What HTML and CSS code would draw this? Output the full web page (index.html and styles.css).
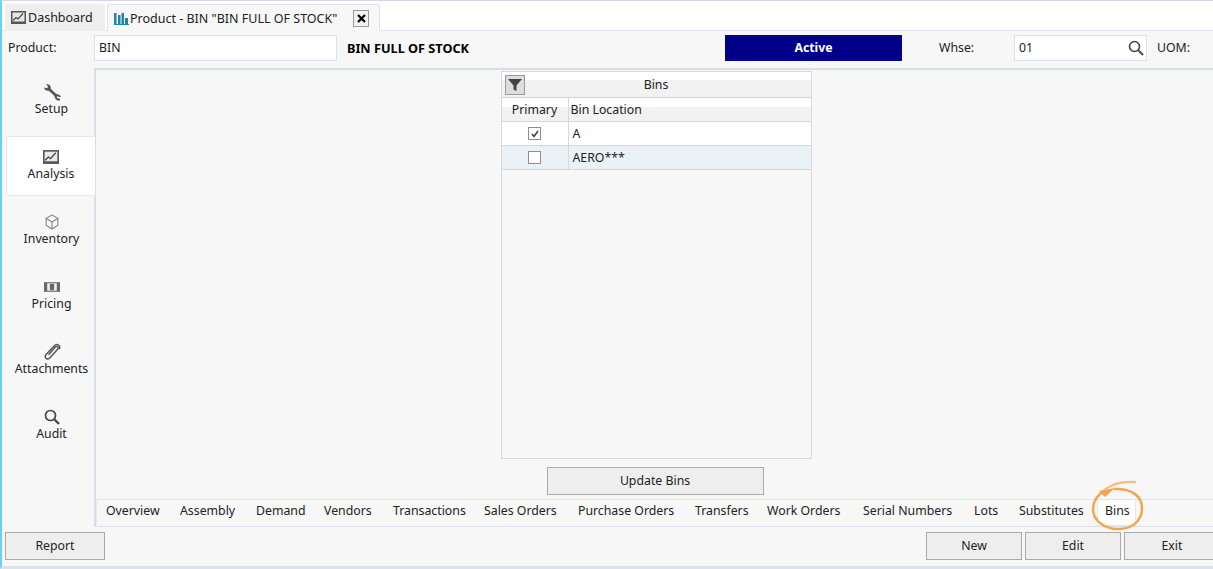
FILE: index.html
```html
<!DOCTYPE html>
<html lang="en">
<head>
<meta charset="utf-8">
<title>Product - BIN</title>
<link rel="stylesheet" href="styles.css">
</head>
<body>
<div class="app">
  <div class="tabs">
    <div class="tab">
      <svg class="ico-tab" viewBox="0 0 15 13"><rect width="15" height="13" fill="#555"/><rect x="1.5" y="1.5" width="12" height="9" fill="#e8e8e8"/><path d="M2 9.500l3-3 2 1.500 5-5.500" fill="none" stroke="#444" stroke-width="1.2"/></svg>
      <span>Dashboard</span>
    </div>
    <div class="tab active">
      <svg class="ico-tab" viewBox="0 0 15 13"><path d="M0 1h2.500v11H0zM4 3h2.500v9H4zM7.500 1H10v11H7.500zM11 6h3v6h-3zM0 12h15v1H0z" fill="#1f86a8"/></svg>
      <span>Product - BIN "BIN FULL OF STOCK"</span>
      <span class="close"><svg viewBox="0 0 9 9"><path d="M1 1l7 7M8 1L1 8" stroke="#000" stroke-width="2.200"/></svg></span>
    </div>
  </div>
  <div class="header">
    <span class="lbl lbl-product">Product:</span>
    <div class="field field-product">BIN</div>
    <strong class="desc">BIN FULL OF STOCK</strong>
    <div class="status">Active</div>
    <span class="lbl lbl-whse">Whse:</span>
    <div class="field field-whse">
      <span>01</span>
      <svg class="ico-search" viewBox="0 0 16 16"><circle cx="6.500" cy="6.500" r="5" fill="none" stroke="#444" stroke-width="1.600"/><path d="M10.500 10.500l4.500 4.500" stroke="#555" stroke-width="2.400"/></svg>
    </div>
    <span class="lbl lbl-uom">UOM:</span>
  </div>
  <div class="body">
    <nav class="side">
      <div class="side-item">
        <svg class="side-ico ico-wrench" viewBox="0 0 18 18"><path d="M6 6l8 7.500" stroke="#555" stroke-width="2.600" fill="none"/><path d="M1 4.500C1.500 7 4 8.500 6.500 7.500 8 6.500 8.300 4 7 2.500 6 1.500 4.500 1 3 1.500l2.200 2-1.200 1.700z" fill="#555"/><path d="M12.500 13c0 2.500 2 4 4.500 3.500" stroke="#555" stroke-width="2" fill="none"/><path d="M13 12.500c1.500-.8 3.500 0 4 1.500" stroke="#555" stroke-width="2" fill="none"/></svg>
        <span>Setup</span>
      </div>
      <div class="side-item selected">
        <svg class="side-ico" viewBox="0 0 15 13"><rect width="15" height="13" fill="#555"/><rect x="1.500" y="1.500" width="12" height="9" fill="#e8e8e8"/><path d="M2 9.500l3-3 2 1.500 5-5.500" fill="none" stroke="#444" stroke-width="1.200"/></svg>
        <span>Analysis</span>
      </div>
      <div class="side-item">
        <svg class="side-ico" viewBox="0 0 14 15"><path d="M7 1l5.500 3v6.500L7 14 1.500 10.500V4zM1.500 4L7 7.500 12.500 4M7 7.500V14" fill="none" stroke="#888" stroke-width="1.100"/></svg>
        <span>Inventory</span>
      </div>
      <div class="side-item">
        <svg class="side-ico" viewBox="0 0 15 11"><rect y="1" width="15" height="9" fill="#666"/><rect x="3" y="2" width="9" height="7" fill="#eee"/><path d="M5.500 2.500h4v6h-4z" fill="#666"/></svg>
        <span>Pricing</span>
      </div>
      <div class="side-item">
        <svg class="side-ico ico-clip" viewBox="0 0 16 16"><path d="M5 10.500l6-7c1.300-1.400 3.300.4 2 2l-7.200 8c-2 2-5-.6-3.200-3L10 2.500c2.500-2.500 6-.2 4.500 3" fill="none" stroke="#555" stroke-width="1.300"/></svg>
        <span>Attachments</span>
      </div>
      <div class="side-item">
        <svg class="side-ico" viewBox="0 0 16 16"><circle cx="6.500" cy="6.500" r="5" fill="none" stroke="#444" stroke-width="1.700"/><path d="M10.500 10.500l4.500 4.500" stroke="#444" stroke-width="2.400"/></svg>
        <span>Audit</span>
      </div>
    </nav>
    <main class="panel">
      <div class="content">
        <div class="bins">
          <div class="bins-title">
            <span class="filter"><svg viewBox="0 0 14 14"><path d="M0 1h14L8.500 7.500V13l-3-1.500v-4z" fill="#444"/></svg></span>
            <span>Bins</span>
          </div>
          <div class="row head">
            <div class="c1">Primary</div>
            <div class="c2">Bin Location</div>
          </div>
          <div class="row">
            <div class="c1"><span class="check"><svg viewBox="0 0 10 10"><path d="M2 5l2 2.500L8 2" fill="none" stroke="#444" stroke-width="1.600"/></svg></span></div>
            <div class="c2 cell">A</div>
          </div>
          <div class="row alt">
            <div class="c1"><span class="check"></span></div>
            <div class="c2 cell">AERO***</div>
          </div>
        </div>
        <button class="btn btn-update">Update Bins</button>
      </div>
      <div class="subtabs">
        <span class="st st-overview">Overview</span>
        <span class="st st-assembly">Assembly</span>
        <span class="st st-demand">Demand</span>
        <span class="st st-vendors">Vendors</span>
        <span class="st st-trans">Transactions</span>
        <span class="st st-so">Sales Orders</span>
        <span class="st st-po">Purchase Orders</span>
        <span class="st st-transfers">Transfers</span>
        <span class="st st-wo">Work Orders</span>
        <span class="st st-serial">Serial Numbers</span>
        <span class="st st-lots">Lots</span>
        <span class="st st-subs">Substitutes</span>
        <span class="st st-bins">Bins</span>
      </div>
    </main>
  </div>
  <div class="footer">
    <button class="btn btn-report">Report</button>
    <div class="spacer"></div>
    <button class="btn btn-act">New</button>
    <button class="btn btn-act">Edit</button>
    <button class="btn btn-act">Exit</button>
  </div>
  <svg class="mark" viewBox="0 0 60 56"><path d="M46 2C33 1 21 4 13 11" fill="none" stroke="#f6bd80" stroke-width="2.200"/><path d="M14 11C6 16 3 23 3 29 3 41 15 49 28 49 42 49 52 41 52 28 52 16 41 8 24 9" fill="none" stroke="#f4a54f" stroke-width="2.500"/><path d="M9 11L25 8 15 17z" fill="#f4a54f"/></svg>
</div>
</body>
</html>
```
FILE: styles.css
```css
* { box-sizing: border-box; }
html, body { margin: 0; padding: 0; height: 100%; overflow: hidden; }
body { font-family: "Noto Sans", "Open Sans", sans-serif; font-size: 12.3px; color: #222; background: #f7f7f7; }
.app { position: relative; width: 1213px; height: 569px; border-left: 2px solid #6ccff6; border-top: 1px solid #d5d5e8; border-bottom: 3px solid #dbe4ee; display: flex; flex-direction: column; }
.tabs { height: 30px; flex: none; display: flex; align-items: flex-end; padding-left: 3px; gap: 2px; background: #fff; border-bottom: 1px solid #dbe4ee; font-size: 12.5px; }
.tab { width: 100px; height: 27px; display: flex; align-items: center; gap: 2px; padding: 0 0 0 6px; background: #eeeeee; border-radius: 3px 3px 0 0; margin-bottom: -1px; }
.tab.active { background: #f7f7f7; border: 1px solid #dbe4ee; border-bottom: 0; width: 273px; padding: 0 0 0 6px; gap: 1px; }
.ico-tab { width: 15px; height: 13px; flex: none; }
.close { width: 16px; height: 17px; margin-left: 15px; border: 1px solid #999; background: #f2f2f2; display: flex; align-items: center; justify-content: center; flex: none; }
.close svg { width: 9px; height: 9px; }
.header { height: 37px; flex: none; display: flex; align-items: center; padding-bottom: 4px; }
.lbl-product { margin-left: 6px; width: 86px; }
.field { height: 26px; background: #fff; border: 1px solid #dbe4ee; display: flex; align-items: center; padding-left: 4px; }
.field-product { width: 243px; }
.desc { margin-left: 10px; width: 378px; font-size: 12.7px; color: #000; }
.status { width: 177px; height: 26px; background: #000088; color: #fff; font-weight: 700; display: flex; align-items: center; justify-content: center; }
.lbl-whse { margin-left: 37px; width: 75px; }
.field-whse { width: 133px; justify-content: space-between; padding-right: 2px; }
.ico-search { width: 16px; height: 16px; }
.lbl-uom { margin-left: 10px; }
.body { flex: 1; min-height: 0; display: flex; }
.side { width: 94px; flex: none; padding-top: 3px; display: flex; flex-direction: column; border-right: 2px solid #d5dfe9; }
.side-item { height: 60px; margin-bottom: 5px; margin-right: -2px; margin-left: 5px; display: flex; flex-direction: column; align-items: center; justify-content: flex-start; padding-top: 13px; line-height: 17px; }
.side-item.selected { margin-left: 4px; margin-right: -1px; background: #fff; border: 1px solid #e4e8ee; border-right: 0; border-radius: 3px 0 0 3px; padding-top: 12px; position: relative; z-index: 1; }
.side-ico { width: 16px; height: 16px; }
.ico-wrench, .ico-clip { width: 18px; height: 18px; margin-top: -1px; margin-bottom: -1px; }
.panel { flex: 1; min-width: 0; display: flex; flex-direction: column; border-top: 2px solid #d5dfe9; }
.content { flex: 1; min-height: 0; display: flex; flex-direction: column; align-items: center; padding-top: 1px; padding-left: 3px; }
.bins { width: 311px; height: 388px; border: 1px solid #d3d9de; background: #f7f7f7; }
.bins-title { height: 26px; position: relative; display: flex; align-items: center; justify-content: center; background: linear-gradient(#fff 0 8px, #f2f2f2 8px); border-bottom: 1px solid #d3d3d3; }
.filter { position: absolute; left: 3px; top: 3px; width: 20px; height: 20px; border: 1px solid #999; background: #ddd; display: flex; align-items: center; justify-content: center; }
.filter svg { width: 14px; height: 14px; }
.row { display: flex; height: 24px; background: #fff; border-bottom: 1px solid #d3d9de; }
.row.head { background: linear-gradient(#fff 0 9px, #f2f2f2 9px); }
.row.alt { background: #ebf2f6; }
.c1 { width: 67px; flex: none; border-right: 1px solid #d3d9de; display: flex; align-items: center; justify-content: center; }
.c2 { flex: 1; display: flex; align-items: center; padding-left: 2px; }
.cell { padding-left: 4px; }
.check { width: 13px; height: 13px; border: 1px solid #8f8f8f; background: #fff; display: flex; align-items: center; justify-content: center; }
.check svg { width: 10px; height: 10px; }
.btn { font: inherit; color: #222; background: #eeeeee; border: 1px solid #aaa; padding: 0 0 2px; }
.btn-update { width: 217px; height: 28px; margin-top: 8px; margin-right: 2px; }
.subtabs { height: 28px; flex: none; display: flex; align-items: center; padding-bottom: 5px; background: #f7f7f7; border-top: 1px solid #dbe4ee; border-bottom: 1px solid #dbe4ee; border-left: 1px solid #e6ebf1; }
.st { display: block; white-space: nowrap; }
.st-overview { margin-left: 9px; width: 74px; }
.st-assembly { width: 76px; }
.st-demand { width: 68px; }
.st-vendors { width: 69px; }
.st-trans { width: 91px; }
.st-so { width: 94px; }
.st-po { width: 117px; }
.st-transfers { width: 72px; }
.st-wo { width: 96px; }
.st-serial { width: 111px; }
.st-lots { width: 45px; }
.st-subs { width: 78px; }
.st-bins { width: 39px; height: 26px; margin-bottom: -5px; padding: 0 0 5px 7px; display: flex; align-items: center; background: #fff; border: 1px solid #e4e8ee; border-top: 0; }
.footer { height: 39px; flex: none; display: flex; align-items: center; padding: 0 0 1px 3px; gap: 3px; }
.spacer { flex: 1; }
.btn-report { width: 100px; height: 28px; }
.btn-act { width: 96px; height: 28px; }
.btn-act:last-child { margin-right: -7px; }
.mark { position: absolute; left: 1088px; top: 479px; width: 60px; height: 56px; pointer-events: none; }
```
